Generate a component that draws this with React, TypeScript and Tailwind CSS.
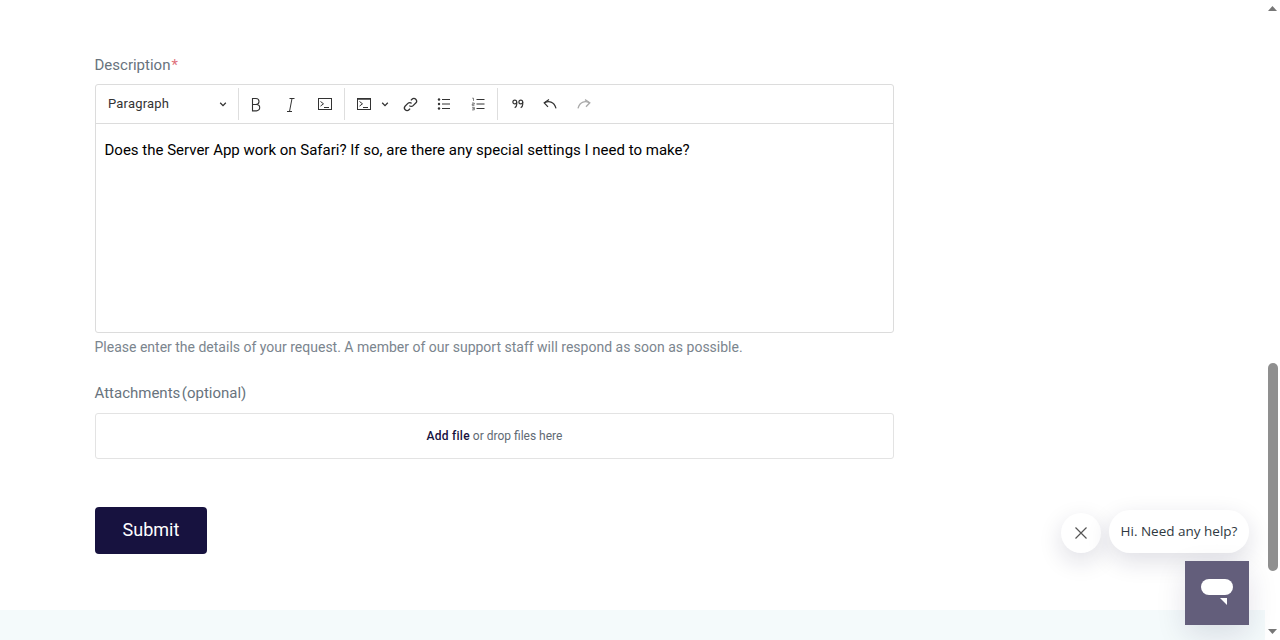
import React from "react";

const Btn = ({ children, cls = "w-[34px]" }: { children: React.ReactNode; cls?: string }) => (
  <div className={`${cls} h-[30px] flex items-center justify-center shrink-0`}>{children}</div>
);

const Sep = () => <div className="w-px h-[32px] bg-[#dedede] shrink-0" />;

const Chevron = () => (
  <svg width="8" height="8" viewBox="0 0 10 10" fill="none" stroke="#333" strokeWidth="1.6" className="shrink-0">
    <path d="M1.500 3.500 5 7l3.500-3.500" />
  </svg>
);

const Terminal = ({ dark = false }: { dark?: boolean }) => (
  <svg width="14" height="14" viewBox="0 0 14 14" fill="none" stroke="#333" strokeWidth="1">
    <rect x="0.5" y="1.500" width="13" height="11" />
    {dark && <path d="M0.500 2h13" strokeWidth="1.500" />}
    <path d="M2.500 4.500l3 2.300-3 2.300M6 10.500h5" />
  </svg>
);

export default function App() {
  return (
    <div className="h-[640px] w-[1280px] overflow-hidden flex bg-white font-['Roboto',sans-serif] relative">
      <main className="w-[1265px] h-[640px] flex flex-col">
        <div className="pl-[95px] pt-[55px] flex-1">
          <div className="w-[799px]">
            <label className="block -ml-[0.5px] text-[15px] leading-[20px] text-[#68737d]">
              Description<span className="text-[#e0717c] ml-[1px]">*</span>
            </label>
            <div className="mt-[9px] border border-[#dcdcdc] rounded-[3px] h-[249px] flex flex-col">
              <div className="h-[39px] border-b border-[#dcdcdc] flex items-center pl-[1px] shrink-0">
                <div className="w-[141px] pl-[11px] pr-[11px] flex items-center justify-between text-[13px] tracking-[0.2px] text-[#333] -mt-[1px] shrink-0">
                  <span>Paragraph</span>
                  <Chevron />
                </div>
                <Sep />
                <Btn>
                  <svg width="16" height="16" viewBox="0 0 16 16" fill="none" stroke="#333" strokeWidth="1.100">
                    <path d="M4.500 2.500H8a3 3 0 0 1 0 6H4.500zM4.500 8.500h4a3.200 3.200 0 0 1 0 6.400h-4z" />
                  </svg>
                </Btn>
                <Btn>
                  <svg width="16" height="16" viewBox="0 0 16 16" fill="none" stroke="#333" strokeWidth="1">
                    <path d="M7.500 2.500h5M5 15.500h5M10 2.500 7.500 15.500" />
                  </svg>
                </Btn>
                <div className="w-[1px] shrink-0" />
                <Btn><Terminal /></Btn>
                <div className="w-[2px] shrink-0" />
                <Sep />
                <Btn cls="w-[37px]"><Terminal dark /></Btn>
                <div className="w-[11px] pr-[5px] flex items-center justify-center shrink-0"><Chevron /></div>
                <Btn>
                  <svg width="15" height="15" viewBox="0 0 20 20" fill="none" stroke="#333" strokeWidth="1.700">
                    <path d="M8.500 11.500a3.500 3.500 0 0 0 5 0l3.500-3.500a3.500 3.500 0 0 0-5-5l-1.500 1.500" />
                    <path d="M11.500 8.500a3.500 3.500 0 0 0-5 0L3 12a3.500 3.500 0 0 0 5 5l1.500-1.500" />
                  </svg>
                </Btn>
                <Btn>
                  <svg width="14" height="14" viewBox="0 0 14 14" fill="none" stroke="#333" strokeWidth="1">
                    <path d="M5 2.500h8M5 7h8M5 11.500h8" />
                    <circle cx="2" cy="2.500" r="1.200" fill="#333" stroke="none" />
                    <circle cx="2" cy="7" r="1.200" fill="#333" stroke="none" />
                    <circle cx="2" cy="11.500" r="1.200" fill="#333" stroke="none" />
                  </svg>
                </Btn>
                <Btn>
                  <svg width="14" height="14" viewBox="0 0 14 14" fill="none" stroke="#333" strokeWidth="1">
                    <path d="M5.500 2.500h8M5.500 7h8M5.500 11.500h8" />
                    <path d="M1.200 1.200h1.300v2.700M1 6h2.300v1.200H1.200v1.200h2.200M1 10.300h2.300v2.600H1M1.500 11.600h1.800" strokeWidth="0.600" />
                  </svg>
                </Btn>
                <div className="w-[2px] shrink-0" />
                <Sep />
                <Btn cls="w-[40px]">
                  <svg width="12" height="10" viewBox="0 0 12 10" fill="none" stroke="#333" strokeWidth="1.200">
                    <circle cx="2.800" cy="3" r="1.900" />
                    <path d="M4.700 3v2.500c0 1.200-.8 2.500-2 3.200" />
                    <circle cx="8.800" cy="3" r="1.900" />
                    <path d="M10.700 3v2.500c0 1.200-.8 2.500-2 3.200" />
                  </svg>
                </Btn>
                <Btn cls="w-[24px]">
                  <svg width="14" height="10" viewBox="0 0 14 10" fill="none" stroke="#333" strokeWidth="1.200" className="shrink-0">
                    <path d="M1.500 3.800c4-2 9.500-1.800 11.500 5.500" />
                    <path d="M6 .6 1.200 3.800 5 7.800" />
                  </svg>
                </Btn>
                <div className="w-[5px] shrink-0" />
                <Btn>
                  <svg width="14" height="10" viewBox="0 0 14 10" fill="none" stroke="#aaa" strokeWidth="1.300">
                    <path d="M12.500 3.800c-4-2-9.500-1.800-11.500 5.500" />
                    <path d="M8 .6l4.800 3.200L9 7.800" />
                  </svg>
                </Btn>
              </div>
              <div className="flex-1 pl-[8.5px] pt-[16px] text-[15px] leading-[20px] text-black">
                Does the Server App work on Safari? If so, are there any special settings I need to make?
              </div>
            </div>
            <p className="-ml-[0.5px] mt-[4px] text-[14px] leading-[20px] text-[#7b858e]">
              Please enter the details of your request. A member of our support staff will respond as soon as possible.
            </p>
            <label className="block -ml-[0.5px] mt-[26px] text-[15px] leading-[20px] text-[#68737d]">
              Attachments<span className="ml-[1.5px]">(optional)</span>
            </label>
            <div className="mt-[10px] h-[46px] border border-[#e3e3e3] rounded-[3px] flex items-center justify-center text-[12px] text-[#5f6a74]">
              <span className="font-medium tracking-[0.25px] text-[#17123f] mr-[3px]">Add file</span> or drop files here
            </div>
            <button className="mt-[48px] w-[112px] h-[47px] pb-[2px] rounded-[4px] bg-[#17123f] text-white text-[18px] flex items-center justify-center">
              Submit
            </button>
          </div>
        </div>
        <div className="h-[30px] bg-[#f4fafb] shrink-0" />
      </main>

      <aside className="w-[15px] h-[640px] bg-white flex flex-col items-center">
        <svg width="9" height="5" viewBox="0 0 9 5" className="mt-[6px] shrink-0"><path d="M0 5h9L4.500 0z" fill="#777" /></svg>
        <div className="h-[352px] w-full shrink-0" />
        <div className="w-[10px] h-[208px] bg-[#8f8f8f] rounded-[5px] shrink-0" />
        <div className="flex-1" />
        <svg width="9" height="5" viewBox="0 0 9 5" className="mb-[6px] shrink-0"><path d="M0 0h9L4.500 5z" fill="#777" /></svg>
      </aside>

      <div className="absolute left-[1061px] top-[513px] w-[40px] h-[40px] rounded-full bg-white shadow-[0_8px_24px_rgba(23,18,63,0.14)] flex items-center justify-center">
        <svg width="14" height="14" viewBox="0 0 14 14" fill="none" stroke="#555" strokeWidth="1.200"><path d="M1.500 1.500l11 11M12.500 1.500l-11 11" /></svg>
      </div>
      <div className="absolute left-[1109px] top-[510px] w-[140px] h-[43px] pb-[1px] rounded-[21px] bg-white shadow-[0_8px_24px_rgba(23,18,63,0.14)] flex items-center justify-center text-[13.5px] text-[#2f3941] font-['Open_Sans',sans-serif]">
        Hi. Need any help?
      </div>
      <div className="absolute left-[1185px] top-[561px] w-[64px] h-[64px] bg-[#635e7b] shadow-[0_10px_30px_rgba(23,18,63,0.12)] flex items-center justify-center">
        <svg width="32" height="28" viewBox="0 0 32 28">
          <rect x="0" y="0" width="32" height="16" rx="8" fill="#fff" />
          <path d="M19 19h7v7z" fill="#fff" />
        </svg>
      </div>
    </div>
  );
}
